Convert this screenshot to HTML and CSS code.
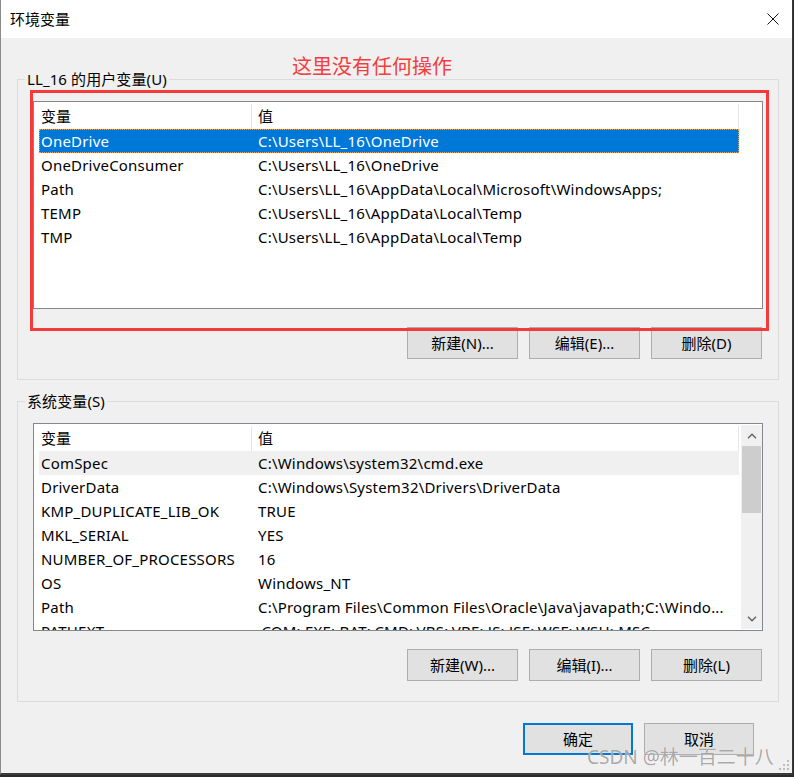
FILE: index.html
```html
<!DOCTYPE html>
<html lang="zh-CN">
<head>
  <meta charset="UTF-8" />
  <title>环境变量</title>
  <link rel="stylesheet" href="styles.css">
</head>
<body>
  <div class="window">
    <!-- Title bar -->
    <div class="titlebar">
      <span class="title">环境变量</span>
      <svg class="close" width="12" height="12" viewBox="0 0 12 12">
        <path d="M0.5 0.5L11.5 11.5M11.5 0.5L0.5 11.5" stroke="#111" stroke-width="1" fill="none"/>
      </svg>
    </div>

    <div class="dialog-body">
      <!-- User variables -->
      <section class="group">
        <span class="group-label">LL_16 的用户变量(U)</span>
        <span class="note">这里没有任何操作</span>
        <div class="note-box"></div>
        <div class="listview">
          <div class="lv-main">
            <div class="lv-header">
              <span class="hcol hcol-name">变量</span>
              <span class="hcol hcol-value">值</span>
            </div>
            <div class="lv-row selected"><span class="c-name">OneDrive</span><span class="c-value">C:\Users\LL_16\OneDrive</span></div>
            <div class="lv-row"><span class="c-name">OneDriveConsumer</span><span class="c-value">C:\Users\LL_16\OneDrive</span></div>
            <div class="lv-row"><span class="c-name">Path</span><span class="c-value">C:\Users\LL_16\AppData\Local\Microsoft\WindowsApps;</span></div>
            <div class="lv-row"><span class="c-name">TEMP</span><span class="c-value">C:\Users\LL_16\AppData\Local\Temp</span></div>
            <div class="lv-row"><span class="c-name">TMP</span><span class="c-value">C:\Users\LL_16\AppData\Local\Temp</span></div>
          </div>
        </div>
        <div class="btn-row">
          <button class="btn">新建(N)...</button>
          <button class="btn">编辑(E)...</button>
          <button class="btn">删除(D)</button>
        </div>
      </section>

      <!-- System variables -->
      <section class="group group-system">
        <span class="group-label">系统变量(S)</span>
        <div class="listview">
          <div class="lv-main">
            <div class="lv-header">
              <span class="hcol hcol-name">变量</span>
              <span class="hcol hcol-value">值</span>
            </div>
            <div class="lv-row hover"><span class="c-name">ComSpec</span><span class="c-value">C:\Windows\system32\cmd.exe</span></div>
            <div class="lv-row"><span class="c-name">DriverData</span><span class="c-value">C:\Windows\System32\Drivers\DriverData</span></div>
            <div class="lv-row"><span class="c-name">KMP_DUPLICATE_LIB_OK</span><span class="c-value">TRUE</span></div>
            <div class="lv-row"><span class="c-name">MKL_SERIAL</span><span class="c-value">YES</span></div>
            <div class="lv-row"><span class="c-name">NUMBER_OF_PROCESSORS</span><span class="c-value">16</span></div>
            <div class="lv-row"><span class="c-name">OS</span><span class="c-value">Windows_NT</span></div>
            <div class="lv-row"><span class="c-name">Path</span><span class="c-value">C:\Program Files\Common Files\Oracle\Java\javapath;C:\Windo...</span></div>
            <div class="lv-row"><span class="c-name">PATHEXT</span><span class="c-value">.COM;.EXE;.BAT;.CMD;.VBS;.VBE;.JS;.JSE;.WSF;.WSH;.MSC</span></div>
          </div>
          <div class="scrollbar">
            <div class="sb-arrow">
              <svg width="10" height="6" viewBox="0 0 10 6"><path d="M1 5.2L5 1.2L9 5.2" stroke="#606060" stroke-width="1.4" fill="none"/></svg>
            </div>
            <div class="sb-thumb"></div>
            <div class="sb-track"></div>
            <div class="sb-arrow">
              <svg width="10" height="6" viewBox="0 0 10 6"><path d="M1 0.8L5 4.8L9 0.8" stroke="#606060" stroke-width="1.4" fill="none"/></svg>
            </div>
          </div>
        </div>
        <div class="btn-row">
          <button class="btn">新建(W)...</button>
          <button class="btn">编辑(I)...</button>
          <button class="btn">删除(L)</button>
        </div>
      </section>

      <!-- OK / Cancel -->
      <div class="footer">
        <button class="btn btn-default">确定</button>
        <button class="btn">取消</button>
      </div>
    </div>

    <span class="watermark">CSDN @林一百二十八</span>
    <svg class="grip" width="10" height="10" viewBox="0 0 10 10">
      <rect x="8" y="0" width="2" height="2" fill="#bdbdbd"/>
      <rect x="4" y="4" width="2" height="2" fill="#bdbdbd"/>
      <rect x="8" y="4" width="2" height="2" fill="#bdbdbd"/>
      <rect x="0" y="8" width="2" height="2" fill="#bdbdbd"/>
      <rect x="4" y="8" width="2" height="2" fill="#bdbdbd"/>
      <rect x="8" y="8" width="2" height="2" fill="#bdbdbd"/>
    </svg>
  </div>
</body>
</html>
```

FILE: styles.css
```css
/* Page */
body {
  margin: 0;
  background: #2b2b2b;
  font-family: "Noto Sans", "Noto Sans CJK SC", sans-serif;
  font-size: 15px;
  color: #000;
}
.window {
  position: relative;
  width: 793px;
  height: 775px;
  background: #f0f0f0;
  border-left: 1px solid #8a8a8a;
  border-right: 1px solid #3a3a3a;
  border-bottom: 2px solid #3a3a3a;
  box-sizing: border-box;
  overflow: hidden;
}
/* Title bar */
.titlebar {
  height: 38px;
  background: #fff;
  display: flex;
  align-items: center;
  justify-content: space-between;
  padding: 0 13px 0 9px;
}
.title {
  line-height: 20px;
}
/* Body */
.dialog-body {
  padding: 41px 13px 0 16px;
}
.group {
  position: relative;
  border: 1px solid #dcdcdc;
  padding: 21px 15px 20px 15px;
}
.group-system {
  margin-top: 21px;
}
.group-label {
  position: absolute;
  top: -12px;
  left: 7px;
  padding: 0 2px;
  line-height: 22px;
  background: #f0f0f0;
  letter-spacing: 0.1px;
}
/* Red annotation */
.note {
  position: absolute;
  top: -24px;
  left: 274px;
  font-size: 20px;
  line-height: 22px;
  color: #f23e3e;
}
.note-box {
  position: absolute;
  top: 10px;
  left: 12px;
  width: 739px;
  height: 241px;
  border: 3px solid #f53a3a;
  box-sizing: border-box;
  z-index: 2;
  pointer-events: none;
}
/* List view */
.listview {
  display: flex;
  height: 208px;
  border: 1px solid #828790;
  background: #fff;
  box-sizing: border-box;
  overflow: hidden;
}
.lv-main {
  flex: 1;
  overflow: hidden;
}
.lv-header {
  display: flex;
  height: 27px;
  align-items: center;
}
.hcol {
  height: 25px;
  line-height: 25px;
  box-sizing: border-box;
  border-right: 1px solid #e5e5e5;
  margin-top: 1px;
}
.hcol-name {
  width: 218px;
  padding-left: 7px;
}
.hcol-value {
  width: 487px;
  padding-left: 6px;
}
.lv-row {
  display: flex;
  width: 700px;
  height: 24px;
  margin-left: 5px;
  line-height: 24px;
  white-space: nowrap;
  letter-spacing: 0.2px;
}
.lv-row.selected {
  background: #0078d7;
  color: #fff;
  outline: 1px dotted #f0a050;
  outline-offset: -1px;
}
.lv-row.hover {
  background: #f0f0f0;
}
.c-name {
  width: 217px;
  padding-left: 2px;
  box-sizing: border-box;
}
.c-value {
  flex: 1;
  padding-left: 2px;
  overflow: hidden;
}
/* Scrollbar */
.scrollbar {
  width: 21px;
  margin: 1px 0;
  background: #f0f0f0;
  display: flex;
  flex-direction: column;
}
.sb-arrow {
  height: 21px;
  display: flex;
  align-items: center;
  justify-content: center;
}
.sb-thumb {
  height: 67px;
  margin: 0 1px;
  background: #cdcdcd;
}
.sb-track {
  flex: 1;
}
/* Buttons */
.btn-row {
  display: flex;
  justify-content: flex-end;
  gap: 11px;
  margin-top: 18px;
  padding-right: 1px;
}
.btn {
  width: 111px;
  height: 32px;
  padding: 0 0 1px;
  font-family: inherit;
  font-size: 15px;
  color: #000;
  background: #e1e1e1;
  border: 1px solid #adadad;
  border-radius: 0;
}
.footer {
  display: flex;
  justify-content: flex-end;
  gap: 11px;
  margin: 21px 25px 0 0;
}
.footer .btn {
  width: 110px;
}
.btn-default {
  border: 2px solid #0078d7;
}
/* Watermark and grip */
.watermark {
  position: absolute;
  left: 586px;
  top: 745px;
  font-size: 19px;
  line-height: 24px;
  color: rgba(110, 110, 110, 0.6);
  text-shadow: 0 0 1px #fff;
  z-index: 3;
}
.grip {
  position: absolute;
  right: 3px;
  bottom: 3px;
}
```
